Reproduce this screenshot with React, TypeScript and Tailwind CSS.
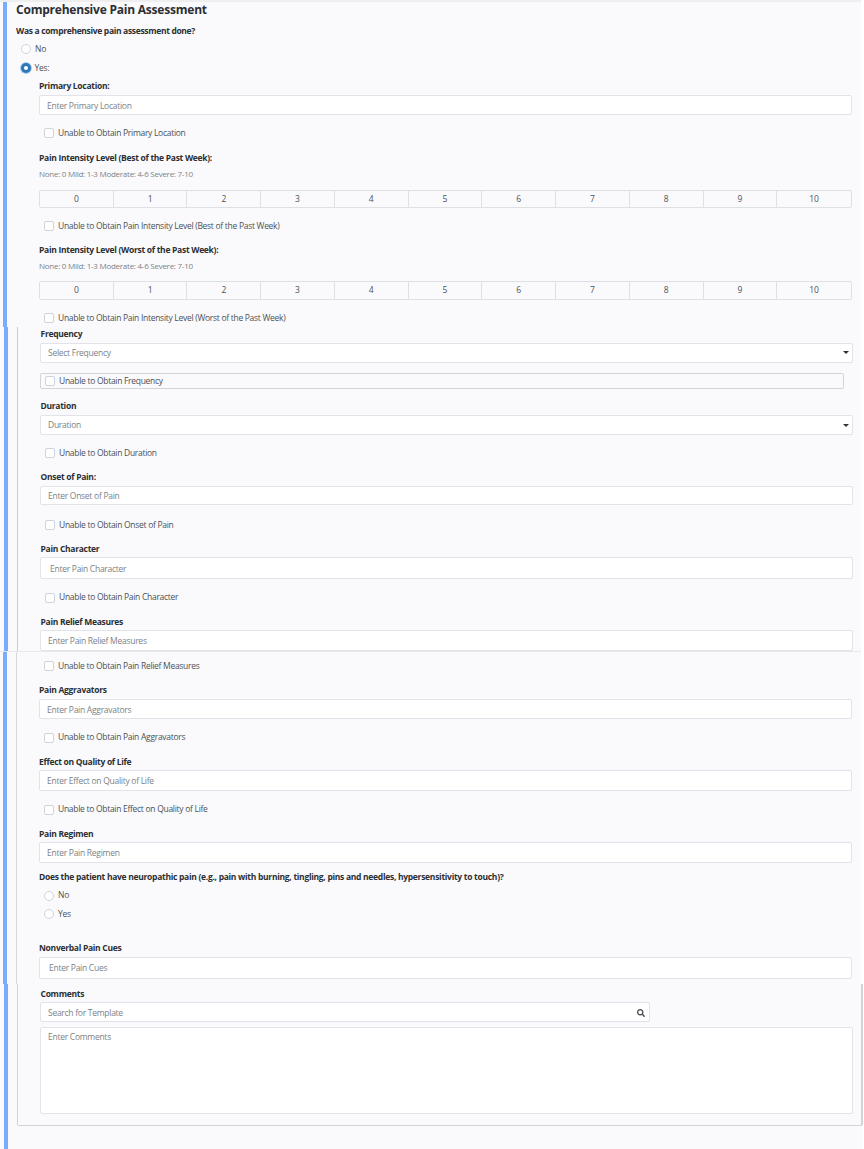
import type { ReactNode } from "react";
import { FaSearch } from "react-icons/fa";

function Label({ className = "", children }: { className?: string; children: ReactNode }) {
  return (
    <div className={`flex items-center whitespace-nowrap text-[8.5px] tracking-[-0.29px] font-bold text-[#2b2f33] ${className}`}>
      <span>{children}</span>
    </div>
  );
}

function Field({ className = "", children }: { className?: string; children: ReactNode }) {
  return (
    <div className={`flex items-center rounded-[2px] border border-[#e1e3e8] bg-white pr-[3px] text-[8.5px] tracking-[-0.27px] whitespace-nowrap text-[#7d8287] ${className}`}>
      {children}
    </div>
  );
}

function Caret() {
  return (
    <svg className="ml-auto h-[3px] w-[6px]" viewBox="0 0 6 3">
      <path d="M0 0h6L3 3z" fill="#2f3337" />
    </svg>
  );
}

function Check({ className = "", boxClass = "ml-[5px]", children }: { className?: string; boxClass?: string; children: ReactNode }) {
  return (
    <div className={`flex items-center whitespace-nowrap text-[8.5px] tracking-[-0.29px] text-[#4c5156] ${className}`}>
      <span className={`mr-[4px] size-[10px] shrink-0 rounded-[2px] border border-[#cfd4d9] bg-white ${boxClass}`} />
      <span>{children}</span>
    </div>
  );
}

function Radio({ className = "", checked = false, children }: { className?: string; checked?: boolean; children: ReactNode }) {
  return (
    <div className={`flex items-center whitespace-nowrap text-[8.5px] tracking-[-0.25px] text-[#4c5156] ${className}`}>
      {checked ? (
        <span className="mr-[4px] flex size-[10px] shrink-0 items-center justify-center rounded-full bg-[#2f77b8] ring-1 ring-[#a9cdee]">
          <span className="size-[4px] rounded-full bg-white" />
        </span>
      ) : (
        <span className="mr-[4px] size-[10px] shrink-0 rounded-full border border-[#cfd4d9] bg-white" />
      )}
      <span>{children}</span>
    </div>
  );
}

function Scale({ className = "" }: { className?: string }) {
  return (
    <div className={`grid grid-cols-11 divide-x divide-[#dfe0e4] rounded-[2px] border border-[#dfe0e4] text-[8.5px] text-[#4c5156] ${className}`}>
      {Array.from({ length: 11 }, (_, n) => (
        <div key={n} className="flex items-center justify-center">
          {n}
        </div>
      ))}
    </div>
  );
}

function Hint() {
  return (
    <div className="mt-[2px] mb-px flex h-[14px] items-center whitespace-nowrap text-[8px] tracking-[-0.26px] text-[#7d8287]">
      <span>None: 0 Mild: 1-3 Moderate: 4-6 Severe: 7-10</span>
    </div>
  );
}

export default function App() {
  return (
    <main className="flex h-[1149px] w-[864px] flex-col bg-white font-['Open_Sans','Noto_Sans',sans-serif]">
      <section className="flex h-[327px] w-[861px] shrink-0 flex-col border-t-2 border-[#efeff0] bg-[#fafafc] pl-[3px]">
        <div className="h-full border-l-4 border-[#78acff] pl-[9px]">
          <h1 className="flex h-[16px] items-center text-[12px] tracking-[-0.22px] font-bold whitespace-nowrap text-[#2b2f33]">
            <span>Comprehensive Pain Assessment</span>
          </h1>
          <Label className="mt-[6px] h-[15px] tracking-[-0.33px]">Was a comprehensive pain assessment done?</Label>
          <Radio className="mt-[1px] h-[18px] pl-[5px]">No</Radio>
          <Radio checked className="h-[20px] pl-[4.5px]">Yes:</Radio>
          <div className="ml-[23px] flex w-[813px] flex-col">
            <Label className="mt-[1px] h-[14px] pt-px">Primary Location:</Label>
            <Field className="mt-[2px] h-[20px] pt-[2px] pl-[7px]">Enter Primary Location</Field>
            <Check className="mt-[11px] h-[14px]">Unable to Obtain Primary Location</Check>
            <Label className="mt-[10px] h-[15px] pt-px">Pain Intensity Level (Best of the Past Week):</Label>
            <Hint />
            <Scale className="mt-[8px] h-[18px]" />
            <Check className="mt-[11px] h-[14px]">Unable to Obtain Pain Intensity Level (Best of the Past Week)</Check>
            <Label className="mt-[10px] h-[14px]">Pain Intensity Level (Worst of the Past Week):</Label>
            <Hint />
            <Scale className="mt-[7px] h-[19px]" />
            <Check className="mt-[11px] h-[14px]">Unable to Obtain Pain Intensity Level (Worst of the Past Week)</Check>
          </div>
        </div>
      </section>

      <section className="h-[324px] w-[861px] shrink-0 bg-[#fafafc] pl-[4px]">
        <div className="h-full border-l-4 border-[#78acff] pl-[9px]">
          <div className="flex h-full w-[836px] flex-col border-l border-[#cccccf] pl-[22px]">
            <Label className="h-[14px] pl-[0.5px]">Frequency</Label>
            <Field className="mt-[2px] h-[20px] pl-[7px]">Select Frequency<Caret /></Field>
            <Check boxClass="ml-[4px]" className="mt-[10px] mr-[9px] h-[16px] rounded-[2px] border border-[#d3d4d8] pt-px">Unable to Obtain Frequency</Check>
            <Label className="mt-[10px] h-[14px] pt-px pl-[0.5px]">Duration</Label>
            <Field className="mt-[2px] h-[20px] pt-px pl-[7px]">Duration<Caret /></Field>
            <Check className="mt-[11px] h-[14px] pt-px">Unable to Obtain Duration</Check>
            <Label className="mt-[11px] h-[14px] pl-[0.5px]">Onset of Pain:</Label>
            <Field className="mt-[1px] h-[20px] pt-[2px] pl-[7px]">Enter Onset of Pain</Field>
            <Check className="mt-[12px] h-[14px] pt-px">Unable to Obtain Onset of Pain</Check>
            <Label className="mt-[11px] h-[14px] pl-[0.5px]">Pain Character</Label>
            <Field className="mt-[1px] h-[22px] pt-[2px] pl-[9px]">Enter Pain Character</Field>
            <Check className="mt-[11px] h-[14px] pt-px">Unable to Obtain Pain Character</Check>
            <Label className="mt-[11px] h-[14px] pl-[0.5px]">Pain Relief Measures</Label>
            <Field className="mt-[1px] h-[21px] pt-[2px] pl-[7px]">Enter Pain Relief Measures</Field>
          </div>
        </div>
      </section>

      <section className="h-[333px] w-[861px] shrink-0 border-t border-[#e8e8ea] bg-[#fafafc] pl-[3px]">
        <div className="h-full border-l-4 border-[#78acff] pl-[9px]">
          <div className="flex h-full w-[836px] flex-col border-l border-[#d8d8db] pl-[22px]">
            <Check className="mt-[7px] h-[14px]">Unable to Obtain Pain Relief Measures</Check>
            <Label className="mt-[10px] h-[14px] pt-px">Pain Aggravators</Label>
            <Field className="mt-[2px] h-[20px] pt-[2px] pl-[7px]">Enter Pain Aggravators</Field>
            <Check className="mt-[11px] h-[14px] pt-px">Unable to Obtain Pain Aggravators</Check>
            <Label className="mt-[11px] h-[14px]">Effect on Quality of Life</Label>
            <Field className="mt-[1px] h-[21px] pt-[2px] pl-[7px]">Enter Effect on Quality of Life</Field>
            <Check className="mt-[11px] h-[14px] pt-px">Unable to Obtain Effect on Quality of Life</Check>
            <Label className="mt-[11px] h-[14px]">Pain Regimen</Label>
            <Field className="mt-[1px] h-[21px] pt-[2px] pl-[7px]">Enter Pain Regimen</Field>
            <Label className="mt-[7px] h-[14px] pt-px">
              Does the patient have neuropathic pain (e.g., pain with burning, tingling, pins and needles, hypersensitivity to touch)?
            </Label>
            <Radio className="mt-[2px] h-[19px] pl-[5px]">No</Radio>
            <Radio className="h-[18px] pl-[5px]">Yes</Radio>
            <Label className="mt-[18px] h-[14px]">Nonverbal Pain Cues</Label>
            <Field className="mt-[2px] h-[22px] pl-[9px]">Enter Pain Cues</Field>
          </div>
        </div>
      </section>

      <section className="h-[165px] w-[863px] shrink-0 bg-[#fafafc] pl-[4px]">
        <div className="h-full border-l-4 border-[#78acff] pl-[9px]">
          <div className="flex h-[142px] flex-col rounded-b-[2px] border border-t-0 border-r-2 border-[#d3d3d7] pr-[8px] pl-[22px]">
            <Label className="mt-[3px] h-[14px] pl-[0.5px]">Comments</Label>
            <Field className="mt-[1px] h-[20px] w-[610px] pt-[2px] pl-[7px]">
              Search for Template
              <FaSearch className="mr-[1px] ml-auto size-[8px] text-[#3f4347]" />
            </Field>
            <Field className="mt-[5px] h-[87px] items-start pt-[3px] pl-[7px]">Enter Comments</Field>
          </div>
        </div>
      </section>
    </main>
  );
}
